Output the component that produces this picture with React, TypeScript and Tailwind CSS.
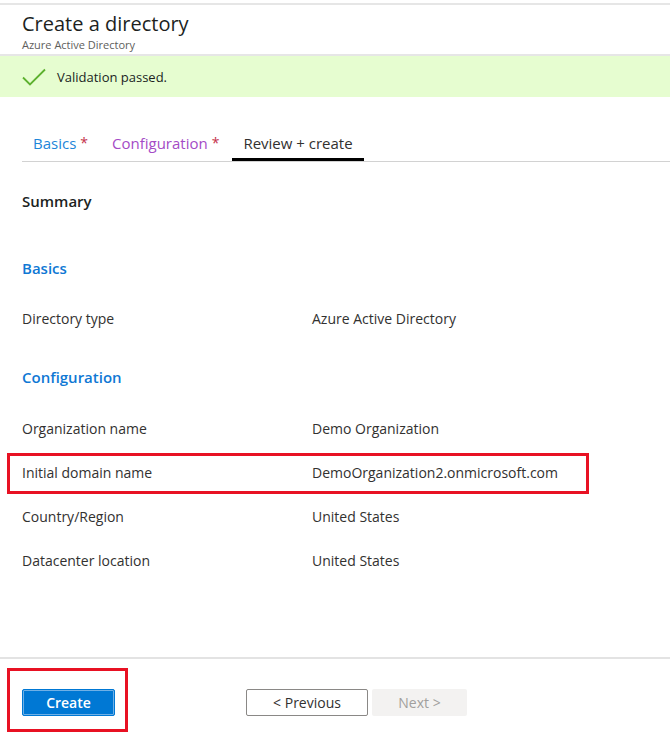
import React from "react"

const rows = [
  { label: "Organization name", value: "Demo Organization" },
  { label: "Initial domain name", value: "DemoOrganization2.onmicrosoft.com", marked: true },
  { label: "Country/Region", value: "United States" },
  { label: "Datacenter location", value: "United States" },
]

function Row({ label, value, marked }: { label: string; value: string; marked?: boolean }) {
  return (
    <div className="relative flex h-[44px] items-center text-[14px]">
      <div className="w-[290px] text-[#323130]">{label}</div>
      <div className="text-[#323130]">{value}</div>
      {marked && (
        <div className="pointer-events-none absolute top-[2px] bottom-[1px] left-[-15px] w-[582px] border-[3px] border-[#e81123]" />
      )}
    </div>
  )
}

export default function App() {
  return (
    <div className="flex h-[746px] w-[670px] flex-col bg-white font-['Open_Sans',sans-serif] text-[13px] leading-[20px] text-[#323130]">
      <div className="mt-[3px] border-t-2 border-[#e6e6e6] px-[22px] pt-[5px] pb-[2px]">
        <h1 className="text-[20px] leading-[27px] text-[#201f1e]">Create a directory</h1>
        <p className="text-[11px] leading-[15px] text-[#605e5c]">Azure Active Directory</p>
      </div>

      <div className="flex h-[43px] items-center border-t-2 border-[#e6e6e6] bg-[#e6fdd0] pl-[22px]">
        <svg width="24" height="18" viewBox="0 0 24 18" fill="none" className="mt-[1px]">
          <path d="M1 9.5 L8 16.5 L23 1.5" stroke="#5db12f" strokeWidth="1.8" />
        </svg>
        <span className="ml-[11px] text-[#201f1e]">Validation passed.</span>
      </div>

      <div className="mt-[28px] ml-[22px] flex gap-[2px] border-b border-[#d2d2d2]">
        <div className="flex h-[36px] items-start border-b-[3px] border-transparent px-[11px] pt-[8px] text-[15px] text-[#1d86d9]">
          Basics<span className="ml-[4px] text-[14px] text-[#c4314b]">*</span>
        </div>
        <div className="flex h-[36px] items-start border-b-[3px] border-transparent px-[11px] pt-[8px] text-[15px] text-[#a44bc6]">
          Configuration<span className="ml-[4px] text-[14px] text-[#c4314b]">*</span>
        </div>
        <div className="h-[36px] border-b-[3px] border-black px-[11px] pt-[8px] text-[15px] text-[#323130]">
          Review + create
        </div>
      </div>

      <div className="flex flex-col px-[22px]">
        <div className="mt-[29px] text-[15px] font-semibold text-[#201f1e]">Summary</div>
        <div className="mt-[47px] text-[15px] font-semibold text-[#0f78d4]">Basics</div>
        <div className="mt-[19px]">
          <Row label="Directory type" value="Azure Active Directory" />
        </div>
        <div className="mt-[26px] text-[15px] font-semibold text-[#0f78d4]">Configuration</div>
        <div className="mt-[20px] flex flex-col">
          {rows.map((r) => (
            <Row key={r.label} {...r} />
          ))}
        </div>
      </div>

      <div className="mt-auto flex h-[89px] items-start border-t-2 border-[#e3e3e3] px-[22px] pt-[30px]">
        <div className="relative">
          <button className="h-[27px] w-[93px] rounded-[2px] border border-[#0078d4] bg-[#0078d4] text-[14px] font-semibold text-white shadow-[inset_0_0_0_1px_#6fb0e6]">
            Create
          </button>
          <div className="pointer-events-none absolute top-[-21px] left-[-15px] h-[64px] w-[121px] border-[3px] border-[#e81123]" />
        </div>
        <button className="ml-[131px] h-[27px] w-[122px] rounded-[2px] border border-[#8a8886] bg-white text-[14px] text-[#323130]">
          &lt; Previous
        </button>
        <button className="ml-[4px] h-[27px] w-[95px] rounded-[2px] bg-[#f3f2f1] text-[14px] text-[#a19f9d]">
          Next &gt;
        </button>
      </div>
    </div>
  )
}
